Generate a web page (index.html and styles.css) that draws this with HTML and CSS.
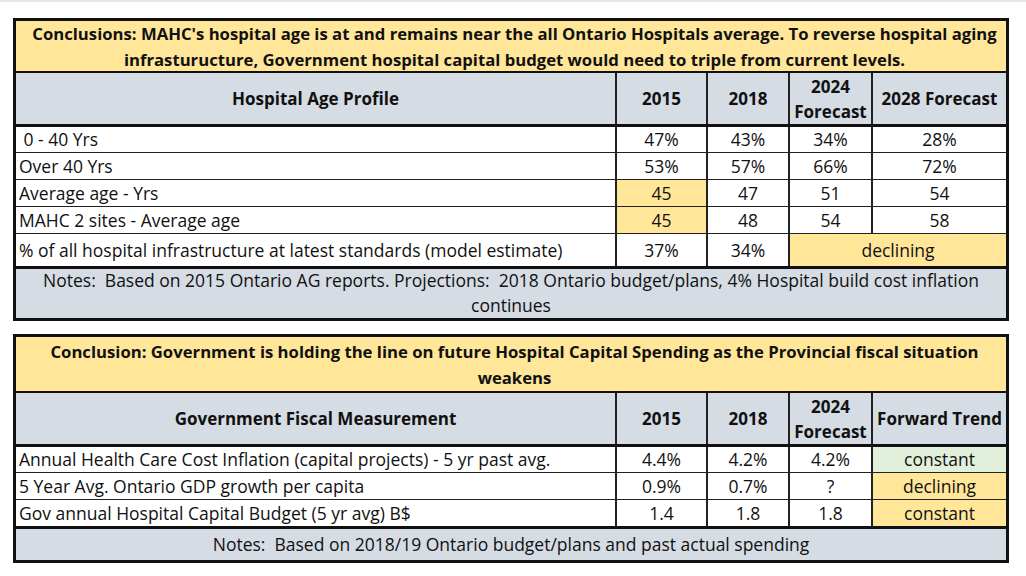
FILE: index.html
```html
<!DOCTYPE html>
<html>
<head>
<meta charset="utf-8">
<link rel="stylesheet" href="styles.css">
</head>
<body>
<div class="page">
  <section class="tbl t1">
    <div class="concl">Conclusions: MAHC's hospital age is at and remains near the all Ontario Hospitals average. To reverse hospital aging<br>infrasturucture, Government hospital capital budget would need to triple from current levels.</div>
    <div class="row head">
      <div class="c lbl">Hospital Age Profile</div>
      <div class="c">2015</div>
      <div class="c">2018</div>
      <div class="c two">2024<br>Forecast</div>
      <div class="c">2028 Forecast</div>
    </div>
    <div class="row data first">
      <div class="c lbl">&nbsp;0 - 40 Yrs</div>
      <div class="c">47%</div><div class="c">43%</div><div class="c">34%</div><div class="c">28%</div>
    </div>
    <div class="row data">
      <div class="c lbl">Over 40 Yrs</div>
      <div class="c">53%</div><div class="c">57%</div><div class="c">66%</div><div class="c">72%</div>
    </div>
    <div class="row data">
      <div class="c lbl">Average age - Yrs</div>
      <div class="c gold">45</div><div class="c">47</div><div class="c">51</div><div class="c">54</div>
    </div>
    <div class="row data">
      <div class="c lbl">MAHC 2 sites - Average age</div>
      <div class="c gold">45</div><div class="c">48</div><div class="c">54</div><div class="c">58</div>
    </div>
    <div class="row data tall">
      <div class="c lbl">% of all hospital infrastructure at latest standards (model estimate)</div>
      <div class="c">37%</div><div class="c">34%</div><div class="c gold span2">declining</div>
    </div>
    <div class="notes n1">Notes:&nbsp; Based on 2015 Ontario AG reports. Projections:&nbsp; 2018 Ontario budget/plans, 4% Hospital build cost inflation<br>continues</div>
  </section>

  <section class="tbl t2">
    <div class="concl c2">Conclusion: Government is holding the line on future Hospital Capital Spending as the Provincial fiscal situation<br>weakens</div>
    <div class="row head">
      <div class="c lbl">Government Fiscal Measurement</div>
      <div class="c">2015</div>
      <div class="c">2018</div>
      <div class="c two">2024<br>Forecast</div>
      <div class="c">Forward Trend</div>
    </div>
    <div class="row data first">
      <div class="c lbl">Annual Health Care Cost Inflation (capital projects) - 5 yr past avg.</div>
      <div class="c">4.4%</div><div class="c">4.2%</div><div class="c">4.2%</div><div class="c green">constant</div>
    </div>
    <div class="row data">
      <div class="c lbl">5 Year Avg. Ontario GDP growth per capita</div>
      <div class="c">0.9%</div><div class="c">0.7%</div><div class="c">?</div><div class="c gold">declining</div>
    </div>
    <div class="row data">
      <div class="c lbl">Gov annual Hospital Capital Budget (5 yr avg) B$</div>
      <div class="c">1.4</div><div class="c">1.8</div><div class="c">1.8</div><div class="c gold">constant</div>
    </div>
    <div class="notes n2">Notes:&nbsp; Based on 2018/19 Ontario budget/plans and past actual spending</div>
  </section>
</div>
</body>
</html>
```

FILE: styles.css
```css
html, body {
  margin: 0;
  padding: 0;
  background: #ffffff;
}
body {
  font-family: "Open Sans", sans-serif;
  font-size: 17.5px;
  color: #111;
  border-top: 2px solid #e6e6e6;
}
.page {
  padding: 16px 0 0 13px;
  display: flex;
  flex-direction: column;
  gap: 13px;
}
.tbl {
  width: 996px;
  box-sizing: border-box;
  border: 3px solid #111;
  background: #fff;
}
.concl {
  background: #ffe699;
  font-weight: 700;
  font-size: 16.7px;
  text-align: center;
  line-height: 26px;
  height: 52px;
  display: flex;
  flex-direction: column;
  justify-content: center;
  border-bottom: 2px solid #111;
  padding: 1px 0 0 7px;
  box-sizing: border-box;
}
.concl.c2 {
  height: 56px;
}
.row {
  display: grid;
  grid-template-columns: 599px 91px 82px 83px 135px;
}
.c {
  display: flex;
  align-items: center;
  justify-content: center;
  text-align: center;
  border-left: 2px solid #222;
  line-height: 25px;
}
.c.lbl {
  border-left: none;
  justify-content: flex-start;
  padding-left: 3px;
  white-space: nowrap;
}
.head {
  background: #d6dce4;
  font-weight: 700;
  font-size: 17px;
  height: 51px;
  border-bottom: 3px solid #111;
  box-sizing: content-box;
}
.head .c.lbl {
  justify-content: center;
  padding-left: 0;
}
.data {
  height: 26px;
  border-top: 1px solid #222;
}
.data.first {
  border-top: none;
  height: 25px;
}
.data.tall {
  height: 32px;
}
.gold {
  background: #ffe699;
}
.green {
  background: #e2efda;
}
.span2 {
  grid-column: span 2;
}
.notes {
  background: #d6dce4;
  border-top: 3px solid #111;
  text-align: center;
  line-height: 25px;
  display: flex;
  flex-direction: column;
  justify-content: center;
  box-sizing: border-box;
}
.n1 {
  height: 52px;
  padding-bottom: 1px;
}
.n2 {
  height: 34px;
}
```
